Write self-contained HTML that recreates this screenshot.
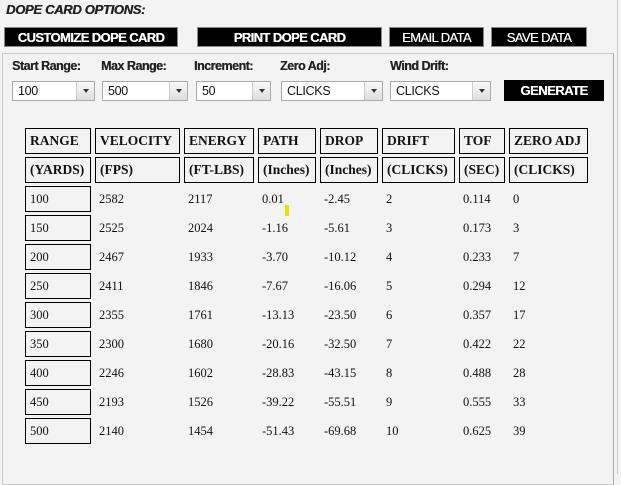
<!DOCTYPE html>
<html><head><style>
body{margin:0;width:621px;height:474px;background:#f3f3f3;position:relative;overflow:hidden;font-family:"Liberation Sans",Arial,sans-serif}
.t{position:absolute;left:6px;top:2px;font-size:13px;font-weight:bold;font-style:italic;color:#222;letter-spacing:-0.3px;text-shadow:0.4px 0 0 #222}
.b{position:absolute;top:27px;height:20px;background:#000;color:#fff;font-weight:bold;font-size:13px;text-align:center;line-height:20px;border:1px solid #888;box-sizing:border-box;letter-spacing:-0.6px;text-shadow:0.3px 0 0 #fff}
.panel{position:absolute;left:2px;top:53px;width:610px;height:430px;border:1px solid #c8c8c8;border-right:1px solid #aaa}
.line2{position:absolute;left:617px;top:0;width:1px;height:474px;background:#ccc}
.lab{position:absolute;top:59px;font-size:12.5px;font-weight:bold;color:#222;letter-spacing:-0.5px;text-shadow:0.3px 0 0 #222}
.sel{position:absolute;top:81px;height:20px;border:1px solid #aaa;background:#fff;box-sizing:border-box;font-size:12.5px;line-height:18px;padding-left:5px;color:#111;letter-spacing:-0.3px}
.sel:after{content:"";position:absolute;right:0;top:0;width:17px;height:18px;background:linear-gradient(#fafafa,#ddd);border-left:1px solid #ccc}
.sel i{position:absolute;right:5px;top:7px;border-left:3.5px solid transparent;border-right:3.5px solid transparent;border-top:4px solid #333;z-index:2}
.gen{position:absolute;left:504px;top:80px;width:100px;height:21px;background:#000;color:#fff;font-weight:bold;font-size:13px;text-align:center;line-height:21px;letter-spacing:-0.5px;text-shadow:0.3px 0 0 #fff}
table{position:absolute;left:21px;top:125px;border-collapse:separate;border-spacing:4px 3px;font-family:"Liberation Serif",serif;font-size:12.5px;color:#111}
td{height:24px;padding:0 4px;white-space:nowrap}
tr.h td{border:1px solid #000;font-weight:bold;font-size:13.5px}
td.f{border:1px solid #000}
</style></head><body>
<div class="t">DOPE CARD OPTIONS:</div>
<div class="b" style="left:4px;width:174px">CUSTOMIZE DOPE CARD</div>
<div class="b" style="left:197px;width:185px">PRINT DOPE CARD</div>
<div class="b" style="left:389px;width:95px;font-weight:normal">EMAIL DATA</div>
<div class="b" style="left:491px;width:96px;font-weight:normal">SAVE DATA</div>
<div class="panel"></div><div class="line2"></div>
<div class="lab" style="left:12px">Start Range:</div>
<div class="lab" style="left:101px">Max Range:</div>
<div class="lab" style="left:194px">Increment:</div>
<div class="lab" style="left:280px">Zero Adj:</div>
<div class="lab" style="left:390px">Wind Drift:</div>
<div class="sel" style="left:12px;width:83px">100<i></i></div>
<div class="sel" style="left:102px;width:86px">500<i></i></div>
<div class="sel" style="left:196px;width:75px">50<i></i></div>
<div class="sel" style="left:281px;width:102px">CLICKS<i></i></div>
<div class="sel" style="left:390px;width:101px">CLICKS<i></i></div>
<div class="gen">GENERATE</div>
<div style="position:absolute;left:285px;top:205px;width:4px;height:11px;background:#e8e000"></div>
<table>
<tr class="h"><td style="width:56px">RANGE</td><td style="width:75px">VELOCITY</td><td style="width:60px">ENERGY</td><td style="width:48px">PATH</td><td style="width:48px">DROP</td><td style="width:63px">DRIFT</td><td style="width:36px">TOF</td><td style="width:69px">ZERO ADJ</td></tr>
<tr class="h"><td>(YARDS)</td><td>(FPS)</td><td>(FT-LBS)</td><td>(Inches)</td><td>(Inches)</td><td>(CLICKS)</td><td>(SEC)</td><td>(CLICKS)</td></tr>
<tr><td class="f">100</td><td>2582</td><td>2117</td><td>0.01</td><td>-2.45</td><td>2</td><td>0.114</td><td>0</td></tr>
<tr><td class="f">150</td><td>2525</td><td>2024</td><td>-1.16</td><td>-5.61</td><td>3</td><td>0.173</td><td>3</td></tr>
<tr><td class="f">200</td><td>2467</td><td>1933</td><td>-3.70</td><td>-10.12</td><td>4</td><td>0.233</td><td>7</td></tr>
<tr><td class="f">250</td><td>2411</td><td>1846</td><td>-7.67</td><td>-16.06</td><td>5</td><td>0.294</td><td>12</td></tr>
<tr><td class="f">300</td><td>2355</td><td>1761</td><td>-13.13</td><td>-23.50</td><td>6</td><td>0.357</td><td>17</td></tr>
<tr><td class="f">350</td><td>2300</td><td>1680</td><td>-20.16</td><td>-32.50</td><td>7</td><td>0.422</td><td>22</td></tr>
<tr><td class="f">400</td><td>2246</td><td>1602</td><td>-28.83</td><td>-43.15</td><td>8</td><td>0.488</td><td>28</td></tr>
<tr><td class="f">450</td><td>2193</td><td>1526</td><td>-39.22</td><td>-55.51</td><td>9</td><td>0.555</td><td>33</td></tr>
<tr><td class="f">500</td><td>2140</td><td>1454</td><td>-51.43</td><td>-69.68</td><td>10</td><td>0.625</td><td>39</td></tr>
</table>
</body></html>
